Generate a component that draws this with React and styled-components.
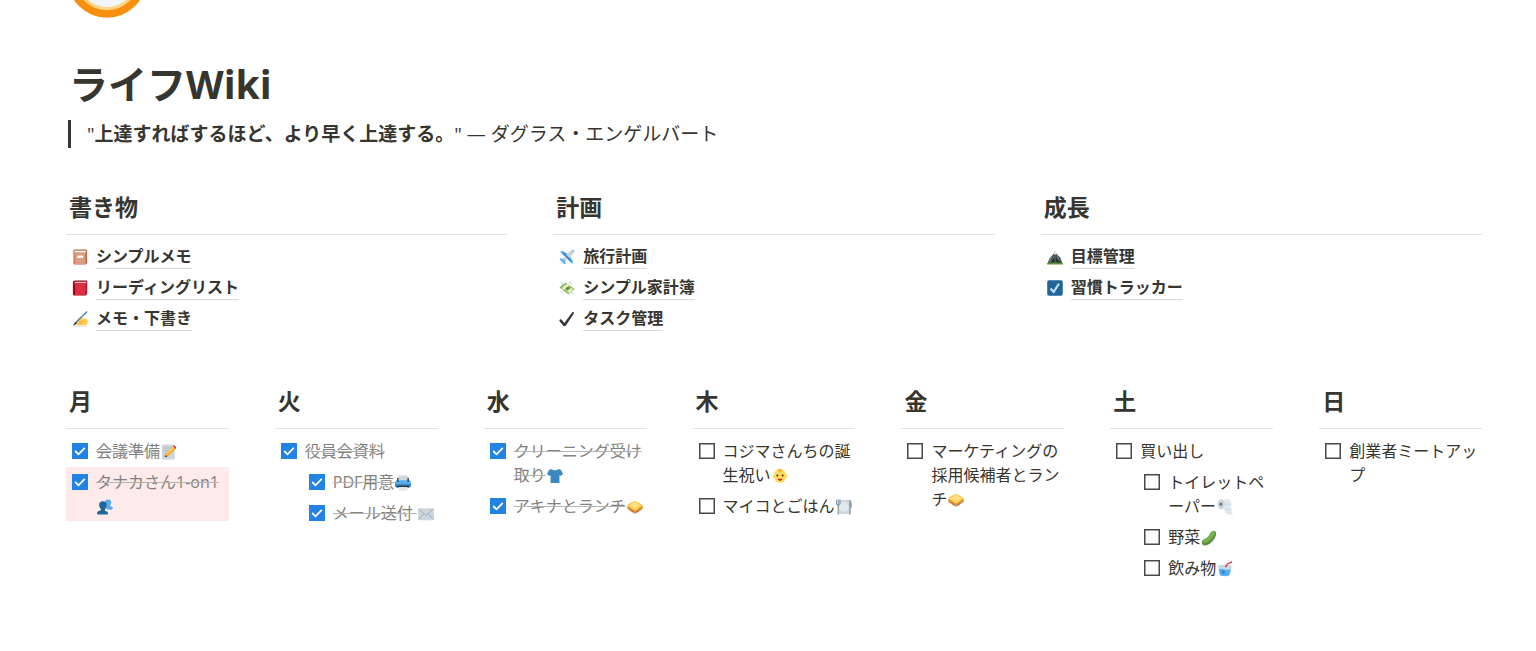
import { useState } from "react";
import styled, { createGlobalStyle } from "styled-components";

const GlobalStyle = createGlobalStyle`
  * {
    box-sizing: border-box;
  }
  body {
    margin: 0;
    background: #fff;
    color: #37352f;
    font-family: "Open Sans", "Noto Sans CJK JP", sans-serif;
    font-size: 16px;
    line-height: 24px;
  }
`;

const Page = styled.main`
  padding: 0 54px 60px 66px;
`;
const PageIcon = styled.svg`
  display: block;
  width: 80px;
  height: 18px;
  margin-left: 1px;
`;
const Title = styled.h1`
  margin: 42px 0 12px;
  padding: 0 3px;
  font-size: 39px;
  font-weight: 700;
  line-height: 48px;
`;
const Quote = styled.blockquote`
  margin: 0 2px;
  padding: 0 16px;
  border-left: 3px solid currentColor;
  font-size: 19px;
  line-height: 28px;
`;
const Columns = styled.div`
  display: grid;
  grid-template-columns: repeat(${(props) => props.$count}, minmax(0, 1fr));
  column-gap: 46px;
  margin-top: ${(props) => props.$top}px;
`;
const Heading = styled.h2`
  margin: 0 0 7px;
  padding: 0 3px 12px;
  border-bottom: 1px solid #e3e2e0;
  font-size: 23px;
  font-weight: 700;
  line-height: 30px;
`;
const List = styled.ul`
  display: flex;
  flex-direction: column;
  gap: 1px;
  margin: 0;
  padding: 0;
  list-style: none;
`;
const LinkRow = styled.li`
  display: flex;
  align-items: center;
  gap: 8px;
  padding: 3px 6px;
`;
const PageLink = styled.a`
  color: inherit;
  font-weight: 700;
  line-height: 23px;
  text-decoration: none;
  border-bottom: 1px solid #dad9d7;
`;
const TodoRow = styled.li`
  display: flex;
  align-items: flex-start;
  gap: 8px;
  padding: 3px 0 3px ${(props) => (props.$nested ? 34 : 6)}px;
  background: ${(props) => (props.$marked ? "#fdebec" : "transparent")};
`;
const Check = styled.span`
  display: grid;
  flex: none;
  width: 16px;
  margin-top: 4px;

  input,
  svg {
    grid-area: 1 / 1;
    width: 16px;
    height: 16px;
    margin: 0;
  }
  input {
    appearance: none;
    cursor: pointer;
  }
  svg {
    pointer-events: none;
  }
`;
const TodoText = styled.label`
  flex: 1;
  min-width: 0;
  line-break: anywhere;
  color: ${(props) => (props.$done ? "#82817d" : "inherit")};
  text-decoration: ${(props) =>
    props.$done ? "line-through 1px #b5b4b1" : "none"};
`;
const EmojiSvg = styled.svg`
  flex: none;
  width: 16px;
  height: 16px;
`;
const InlineEmoji = styled(EmojiSvg)`
  margin: 0 1px;
  vertical-align: -3px;
`;

const emojis = {
  notebook: (
    <>
      <path fill="#c1694f" d="M3 5c0-2 1-4 4-4h25l2 2v29l-3 3H6c-2 0-3-1-3-3z" />
      <path fill="#fff" d="M6 4h25v4H6z" />
      <path fill="#d99e82" d="M7 8h23v26H7z" />
      <path fill="#eec2ad" d="M3 5h3v28H3z" opacity=".5" />
      <path fill="#fff" d="M12 15h13v5H12z" />
    </>
  ),
  book: (
    <>
      <path fill="#a0041e" d="M2 6c0-3 2-5 5-5h25l2 2v28l-3 4H6c-2 0-4-1-4-4z" />
      <path fill="#f4c7ce" d="M6 4h26v4H6z" />
      <path fill="#dd2e44" d="M7 7h24v27H7z" />
      <path fill="#be1931" d="M31 6l3-3v28l-3 3z" />
    </>
  ),
  writing: (
    <>
      <path stroke="#3b88c3" strokeWidth="3" d="M34 1L9 26" />
      <path
        fill="#ffcc4d"
        d="M10 22c3-5 7-9 12-11l3 3-4 4c6-2 10-2 13 1 3 4 2 10-2 13H12c-5-2-5-7-2-10z"
      />
      <path stroke="#3b88c3" strokeWidth="3" d="M22 13L8 27" />
      <path fill="#292f33" d="M7 25l4 3-9 6z" />
      <path fill="none" stroke="#ef9645" strokeWidth="1.5" d="M14 28h8M16 24h8l4-4" />
      <path fill="#ccd6dd" d="M3 33h28v2H3z" />
    </>
  ),
  plane: (
    <>
      <path fill="#55acee" d="M3 6l4-2 14 8-6 6zM30 33l2-4-8-14-6 6z" />
      <path fill="#ccd6dd" d="M34 2c-3-2-7 0-10 3L7 23c-2 3-3 6-2 8 2 1 5 0 8-2l18-17c3-3 5-7 3-10z" />
      <path fill="#55acee" d="M2 21l10 3-4 4-6-3zM15 34l-3-10-4 4 3 6zM30 3c2-1 4 1 3 3l-3-1z" />
      <path stroke="#3b88c3" strokeWidth="4" d="M8 9l12 10M27 28L17 16" />
    </>
  ),
  money: (
    <>
      <path fill="#e1e8ed" d="M2 2l11 4-7 8zM22 2l6-1 1 10-7-2zM2 23l7 3-1 8zM25 27l9 1-2 6z" />
      <path fill="#78b159" d="M1 17L15 6l20 14-14 12z" />
      <path fill="#a6d388" d="M5 17l10-8 16 11-10 9z" />
      <path fill="#5c913b" d="M12 18l6-5 7 5-6 5z" />
      <path fill="#ffe8b6" d="M18 9l5 3-12 10-5-3zM28 18l4 3-9 8-4-3z" />
    </>
  ),
  check: (
    <path fill="#31373d" d="M1 21c1-3 4-3 6 0l5 6L29 4c2-3 6-1 4 2L16 32c-2 3-5 3-7 0L2 24c-1-1-1-2-1-3z" />
  ),
  mountain: (
    <>
      <path fill="#4b545d" d="M1 33L6 20l6-6 6-9 6 9 6 5 5 14z" />
      <path fill="#e1e8ed" d="M14 12l4-8 5 8-3-1-2 3-2-3z" />
      <path fill="none" stroke="#9aaab4" strokeWidth="1.5" d="M10 18l-4 10M15 17l-2 7M23 17l5 10" />
      <path fill="#292f33" d="M9 31l6-13 3 13zM21 31V18l9 13z" />
      <path fill="#5c913b" d="M0 32c8-2 27-2 36 0v3H0z" />
    </>
  ),
  checkbox: (
    <>
      <rect width="35" height="35" x=".5" y=".5" fill="#226699" rx="4" />
      <path fill="none" stroke="#bbddf5" strokeWidth="5" d="M8 19l7 8L27 8" />
    </>
  ),
  memo: (
    <>
      <path fill="#ccd6dd" d="M2 4c0-2 2-3 4-3h22c2 0 3 1 3 3v28c0 2-1 3-3 3H6c-2 0-4-1-4-3z" />
      <path stroke="#99aab5" strokeWidth="1.5" d="M6 9h19M6 15h15M6 21h10M6 27h9" />
      <path fill="#ffac33" d="M28 4l6 6-17 17-8 3 3-9z" />
      <path fill="#ffcc4d" d="M28 4l3 3-17 17-2-3z" />
      <path fill="#dd2e44" d="M27 5c2-5 10 2 6 6z" />
      <path fill="#292f33" d="M11 25l3 3-5 2z" />
    </>
  ),
  people: (
    <>
      <path
        fill="#55acee"
        d="M25 1c-6 0-8 4-7 9 0 4 2 6 3 8v5l11 1c3-1 4-3 3-6l-6-2c4-6 5-15-4-15z"
      />
      <path
        fill="#226699"
        d="M13 5c-6 0-9 4-8 10 1 4 2 6 4 8v2l-7 3c-2 1-2 4-1 7h23c2-4 0-7-6-8v-4c5-6 6-18-5-18z"
      />
    </>
  ),
  printer: (
    <>
      <path fill="#ccd6dd" d="M8 1h20v14H8z" />
      <path fill="#55acee" d="M3 12h30l3 4v6H0v-6z" />
      <path fill="#3b88c3" d="M0 20h36v5c0 2-1 3-3 3H3c-2 0-3-1-3-3z" />
      <path fill="#292f33" d="M5 6h3v9H5zM28 6h3v9h-3zM5 24h26v4H5z" />
      <path fill="#e1e8ed" d="M8 27h20v8H8z" />
    </>
  ),
  envelope: (
    <>
      <rect width="36" height="27" y="5" fill="#ccd6dd" rx="3" />
      <path fill="none" stroke="#99aab5" strokeWidth="2" d="M2 7l16 14L34 7M2 30l11-13M34 30L23 17" />
    </>
  ),
  shirt: (
    <path
      fill="#3b88c3"
      d="M10 2c4 4 12 4 16 0l6 3 4 9-6 4-2-2v18H8V16l-2 2-6-4 4-9z"
    />
  ),
  sandwich: (
    <>
      <path fill="#d99e82" d="M1 17l17 12 17-12v6L18 34 1 23z" />
      <path fill="#77b255" d="M1 18l17 10 17-10-1 4-16 9L2 22z" />
      <path fill="#dd2e44" d="M6 23l10 7-4-1zM20 30l9-5-5 5z" />
      <path fill="#f4900c" d="M1 14l17 12 17-12v5L18 30 1 19z" />
      <path fill="#ffcc4d" d="M1 14C4 9 12 7 18 4c5 3 13 5 17 10L18 25z" />
      <path fill="#ffe08a" d="M6 14l12-7 12 7-12 7z" />
    </>
  ),
  baby: (
    <>
      <path fill="#ffdc5d" d="M18 2C9 2 6 8 5 14c-5 1-5 8 0 9 2 7 7 11 13 11s11-4 13-11c5-1 5-8 0-9C30 8 27 2 18 2z" />
      <path fill="none" stroke="#f4900c" strokeWidth="2" d="M13 5c4-4 10 0 7 3-2 2-5 0-3-2" />
      <circle cx="12" cy="17" r="2.3" fill="#662113" />
      <circle cx="24" cy="17" r="2.3" fill="#662113" />
      <path fill="#df1f32" d="M13 24h10c-1 6-9 6-10 0z" />
    </>
  ),
  plate: (
    <>
      <path fill="#ccd6dd" d="M4 2h28v32H4z" />
      <circle cx="18" cy="18" r="11" fill="#e1e8ed" />
      <path fill="none" stroke="#8899a6" strokeWidth="2.5" d="M1 1v10l4 4 4-4V1M5 1v34" />
      <path fill="#8899a6" d="M30 35V1c6 2 6 12 5 19h-2v15z" />
    </>
  ),
  paper: (
    <>
      <path fill="#e1e8ed" d="M9 1h18c4 0 5 3 5 8v17l4 9c-6 1-12 0-17-3l-3-10H9z" />
      <ellipse cx="9" cy="12" rx="8" ry="11" fill="#ccd6dd" />
      <ellipse cx="9" cy="12" rx="3" ry="4" fill="#66757f" />
      <path fill="none" stroke="#b8c5cd" strokeWidth="1" d="M17 12h15M17 22c5 2 10 3 15 2" />
    </>
  ),
  cucumber: (
    <>
      <path fill="#5c913b" d="M25 3c4-3 9 0 9 5 0 11-12 25-24 27-6 1-9-4-8-9 2-7 9-5 14-11 4-4 4-9 9-12z" />
      <path fill="#77b255" d="M25 3c4-2 7 1 6 5C27 18 18 27 9 29c-4 1-6-1-5-4 3-5 8-4 13-10 4-4 4-9 8-12z" />
    </>
  ),
  drink: (
    <>
      <path fill="#bbddf5" d="M2 11h31l-4 20c-1 5-22 5-23 0z" />
      <path fill="#55acee" d="M4 19c6-3 15 3 27 0l-3 12c-1 4-20 4-21 0z" />
      <ellipse cx="17" cy="12" rx="15" ry="4" fill="#ccd6dd" />
      <path fill="none" stroke="#dd2e44" strokeWidth="3" d="M19 14l5-8 10-4" />
      <circle cx="14" cy="25" r="4" fill="#3b88c3" />
    </>
  ),
};

const sections = [
  {
    title: "書き物",
    links: [
      ["notebook", "シンプルメモ"],
      ["book", "リーディングリスト"],
      ["writing", "メモ・下書き"],
    ],
  },
  {
    title: "計画",
    links: [
      ["plane", "旅行計画"],
      ["money", "シンプル家計簿"],
      ["check", "タスク管理"],
    ],
  },
  {
    title: "成長",
    links: [
      ["mountain", "目標管理"],
      ["checkbox", "習慣トラッカー"],
    ],
  },
];

const days = [
  {
    title: "月",
    todos: [
      { text: "会議準備", emoji: "memo", done: true },
      { text: "タナカさん1-on1", emoji: "people", done: true, marked: true },
    ],
  },
  {
    title: "火",
    todos: [
      { text: "役員会資料", done: true },
      { text: "PDF用意", emoji: "printer", done: true, nested: true },
      { text: "メール送付 ", emoji: "envelope", done: true, nested: true },
    ],
  },
  {
    title: "水",
    todos: [
      { text: "クリーニング受け取り", emoji: "shirt", done: true },
      { text: "アキナとランチ", emoji: "sandwich", done: true },
    ],
  },
  {
    title: "木",
    todos: [
      { text: "コジマさんちの誕生祝い", emoji: "baby" },
      { text: "マイコとごはん", emoji: "plate" },
    ],
  },
  {
    title: "金",
    todos: [{ text: "マーケティングの採用候補者とランチ", emoji: "sandwich" }],
  },
  {
    title: "土",
    todos: [
      { text: "買い出し" },
      { text: "トイレットペーパー", emoji: "paper", nested: true },
      { text: "野菜", emoji: "cucumber", nested: true },
      { text: "飲み物", emoji: "drink", nested: true },
    ],
  },
  { title: "日", todos: [{ text: "創業者ミートアップ" }] },
];

function Todo({ id, todo }) {
  const [done, setDone] = useState(Boolean(todo.done));

  return (
    <TodoRow $nested={todo.nested} $marked={todo.marked}>
      <Check>
        <input
          type="checkbox"
          id={id}
          checked={done}
          onChange={(e) => setDone(e.target.checked)}
        />
        <svg viewBox="0 0 16 16" fill="none" aria-hidden="true">
          {done ? (
            <>
              <path fill="#2383e2" d="M0 0h16v16H0z" />
              <path stroke="#fff" strokeWidth="1.8" d="M3.2 8l3.3 3.3 6.3-6.5" />
            </>
          ) : (
            <path stroke="#4b4944" strokeWidth="1.5" d="M.75.75h14.5v14.5H.75z" />
          )}
        </svg>
      </Check>
      <TodoText htmlFor={id} $done={done}>
        {todo.text}
        {todo.emoji && (
          <InlineEmoji viewBox="0 0 36 36" aria-hidden="true">
            {emojis[todo.emoji]}
          </InlineEmoji>
        )}
      </TodoText>
    </TodoRow>
  );
}

function App() {
  return (
    <Page lang="ja">
      <GlobalStyle />
      <PageIcon viewBox="0 62 80 18" aria-hidden="true">
        <circle cx="40" cy="40" r="39.7" fill="#f7900f" />
        <circle cx="40" cy="40" r="32.2" fill="#ffd583" />
        <circle cx="40" cy="40" r="29" fill="#f0f5fa" />
      </PageIcon>
      <Title>ライフWiki</Title>
      <Quote>
        "<b>上達すればするほど、より早く上達する。</b>" — ダグラス・エンゲルバート
      </Quote>

      <Columns $count={3} $top={44}>
        {sections.map((section) => (
          <section key={section.title}>
            <Heading>{section.title}</Heading>
            <List>
              {section.links.map(([icon, text]) => (
                <LinkRow key={text}>
                  <EmojiSvg viewBox="0 0 36 36" fill="none" aria-hidden="true">
                    {emojis[icon]}
                  </EmojiSvg>
                  <PageLink href="#">{text}</PageLink>
                </LinkRow>
              ))}
            </List>
          </section>
        ))}
      </Columns>

      <Columns $count={7} $top={52}>
        {days.map((day, d) => (
          <section key={day.title}>
            <Heading>{day.title}</Heading>
            <List>
              {day.todos.map((todo, i) => (
                <Todo key={todo.text} id={`todo-${d}-${i}`} todo={todo} />
              ))}
            </List>
          </section>
        ))}
      </Columns>
    </Page>
  );
}

export default App;
